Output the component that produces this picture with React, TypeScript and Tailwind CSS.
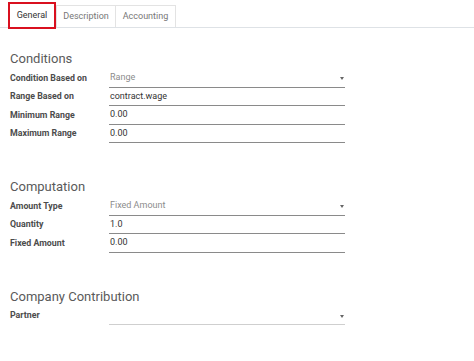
import React from "react";

type Field = { label: string; value: string; select?: boolean; muted?: boolean; light?: boolean };

const sections: { title: string; fields: Field[] }[] = [
  {
    title: "Conditions",
    fields: [
      { label: "Condition Based on", value: "Range", select: true, muted: true },
      { label: "Range Based on", value: "contract.wage" },
      { label: "Minimum Range", value: "0.00" },
      { label: "Maximum Range", value: "0.00" },
    ],
  },
  {
    title: "Computation",
    fields: [
      { label: "Amount Type", value: "Fixed Amount", select: true, muted: true },
      { label: "Quantity", value: "1.0" },
      { label: "Fixed Amount", value: "0.00" },
    ],
  },
  {
    title: "Company Contribution",
    fields: [{ label: "Partner", value: "", select: true, light: true }],
  },
];

function Row({ field }: { field: Field }) {
  return (
    <div className="flex h-[18.5px] items-center">
      <div className="w-[99px] text-[8.8px] font-bold text-[#4c4c4c]">{field.label}</div>
      <div
        className={`relative flex h-full w-[236px] items-center border-b ${
          field.light ? "border-[#cfcfcf]" : "border-[#8a8a8a]"
        }`}
      >
        <span className={`pl-[1px] text-[9px] ${field.muted ? "text-[#8c8c8c]" : "text-[#333]"}`}>
          {field.value}
        </span>
        {field.select && (
          <span className="absolute right-[1px] top-[8px] h-0 w-0 border-x-[2.5px] border-t-[3px] border-x-transparent border-t-[#666]" />
        )}
      </div>
    </div>
  );
}

export default function App() {
  return (
    <div className="h-[361px] w-[474px] bg-white" style={{ fontFamily: "Roboto, 'Noto Sans', sans-serif" }}>
      {/* Tabs */}
      <div className="flex h-[28px] items-end border-b border-[#dee2e6] pl-[8px]">
        <div className="mb-[-2px] flex h-[27px] w-[48px] items-center justify-center border-2 border-[#d9101f] bg-white text-[9px] text-[#333]">
          General
        </div>
        <div className="flex h-[22px] w-[60px] items-center justify-center border border-b-0 border-[#e3e3e3] text-[9px] text-[#777]">
          Description
        </div>
        <div className="flex h-[22px] w-[60px] items-center justify-center border border-b-0 border-l-0 border-[#e3e3e3] text-[9px] text-[#777]">
          Accounting
        </div>
      </div>

      <div className="flex flex-col gap-[34px] pl-[10px] pt-[21px]">
        {sections.map((s) => (
          <div key={s.title}>
            <div className="h-[20px] text-[13px] leading-[20px] text-[#5a5a5a]">{s.title}</div>
            {s.fields.map((f) => (
              <Row key={f.label} field={f} />
            ))}
          </div>
        ))}
      </div>
    </div>
  );
}
